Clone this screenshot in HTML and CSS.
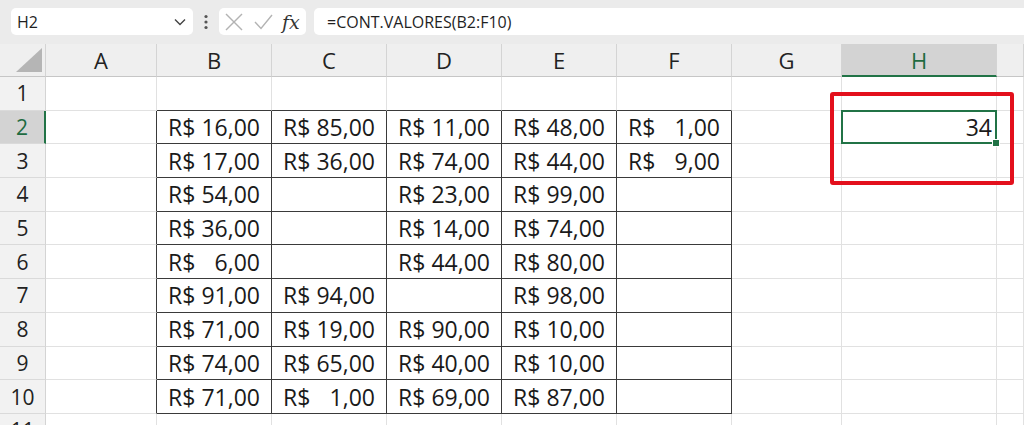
FILE: index.html
```html
<!DOCTYPE html>
<html lang="pt-BR">
  <head>
    <meta charset="UTF-8" />
    <meta name="viewport" content="width=device-width, initial-scale=1.0" />
    <title>CONT.VALORES</title>
    <link rel="stylesheet" href="styles.css">
  </head>
  <body>
    <div class="toolbar">
      <div class="namebox">
        <span>H2</span>
        <svg class="chev" width="12" height="8" viewBox="0 0 12 8"><polyline points="1,1.5 6,6.5 11,1.5" fill="none" stroke="#444" stroke-width="1.4"/></svg>
      </div>
      <svg class="dots" width="6" height="16" viewBox="0 0 6 16"><circle cx="3" cy="2.5" r="1.6" fill="#555"/><circle cx="3" cy="8" r="1.6" fill="#555"/><circle cx="3" cy="13.5" r="1.6" fill="#555"/></svg>
      <div class="fxbox">
        <svg width="18" height="18" viewBox="0 0 18 18"><line x1="1" y1="1" x2="17" y2="17" stroke="#b3b3b3" stroke-width="1.4"/><line x1="17" y1="1" x2="1" y2="17" stroke="#b3b3b3" stroke-width="1.4"/></svg>
        <svg width="19" height="16" viewBox="0 0 19 16"><polyline points="1,8 7,14.5 18,1" fill="none" stroke="#b3b3b3" stroke-width="1.4"/></svg>
        <span class="fx">fx</span>
      </div>
      <div class="formula">=CONT.VALORES(B2:F10)</div>
    </div>

    <div class="sheet">
      <!-- cabeçalho das colunas -->
      <div class="corner"><span></span></div>
      <div class="ch">A</div>
      <div class="ch">B</div>
      <div class="ch">C</div>
      <div class="ch">D</div>
      <div class="ch">E</div>
      <div class="ch">F</div>
      <div class="ch">G</div>
      <div class="ch sel">H</div>
      <div class="ch"></div>

      <!-- 1 -->
      <div class="rh">1</div>
      <div class="c"></div>
      <div class="c et"></div>
      <div class="c et"></div>
      <div class="c et"></div>
      <div class="c et"></div>
      <div class="c et"></div>
      <div class="c"></div>
      <div class="c"></div>
      <div class="c"></div>

      <!-- 2 -->
      <div class="rh sel">2</div>
      <div class="c el"></div>
      <div class="c b"><span>R$</span><span>16,00</span></div>
      <div class="c b"><span>R$</span><span>85,00</span></div>
      <div class="c b"><span>R$</span><span>11,00</span></div>
      <div class="c b"><span>R$</span><span>48,00</span></div>
      <div class="c b"><span>R$</span><span>1,00</span></div>
      <div class="c"></div>
      <div class="c num active">34<i class="handle"></i></div>
      <div class="c"></div>

      <!-- 3 -->
      <div class="rh">3</div>
      <div class="c el"></div>
      <div class="c b"><span>R$</span><span>17,00</span></div>
      <div class="c b"><span>R$</span><span>36,00</span></div>
      <div class="c b"><span>R$</span><span>74,00</span></div>
      <div class="c b"><span>R$</span><span>44,00</span></div>
      <div class="c b"><span>R$</span><span>9,00</span></div>
      <div class="c"></div>
      <div class="c"></div>
      <div class="c"></div>

      <!-- 4 -->
      <div class="rh">4</div>
      <div class="c el"></div>
      <div class="c b"><span>R$</span><span>54,00</span></div>
      <div class="c b"></div>
      <div class="c b"><span>R$</span><span>23,00</span></div>
      <div class="c b"><span>R$</span><span>99,00</span></div>
      <div class="c b"></div>
      <div class="c"></div>
      <div class="c"></div>
      <div class="c"></div>

      <!-- 5 -->
      <div class="rh">5</div>
      <div class="c el"></div>
      <div class="c b"><span>R$</span><span>36,00</span></div>
      <div class="c b"></div>
      <div class="c b"><span>R$</span><span>14,00</span></div>
      <div class="c b"><span>R$</span><span>74,00</span></div>
      <div class="c b"></div>
      <div class="c"></div>
      <div class="c"></div>
      <div class="c"></div>

      <!-- 6 -->
      <div class="rh">6</div>
      <div class="c el"></div>
      <div class="c b"><span>R$</span><span>6,00</span></div>
      <div class="c b"></div>
      <div class="c b"><span>R$</span><span>44,00</span></div>
      <div class="c b"><span>R$</span><span>80,00</span></div>
      <div class="c b"></div>
      <div class="c"></div>
      <div class="c"></div>
      <div class="c"></div>

      <!-- 7 -->
      <div class="rh">7</div>
      <div class="c el"></div>
      <div class="c b"><span>R$</span><span>91,00</span></div>
      <div class="c b"><span>R$</span><span>94,00</span></div>
      <div class="c b"></div>
      <div class="c b"><span>R$</span><span>98,00</span></div>
      <div class="c b"></div>
      <div class="c"></div>
      <div class="c"></div>
      <div class="c"></div>

      <!-- 8 -->
      <div class="rh">8</div>
      <div class="c el"></div>
      <div class="c b"><span>R$</span><span>71,00</span></div>
      <div class="c b"><span>R$</span><span>19,00</span></div>
      <div class="c b"><span>R$</span><span>90,00</span></div>
      <div class="c b"><span>R$</span><span>10,00</span></div>
      <div class="c b"></div>
      <div class="c"></div>
      <div class="c"></div>
      <div class="c"></div>

      <!-- 9 -->
      <div class="rh">9</div>
      <div class="c el"></div>
      <div class="c b"><span>R$</span><span>74,00</span></div>
      <div class="c b"><span>R$</span><span>65,00</span></div>
      <div class="c b"><span>R$</span><span>40,00</span></div>
      <div class="c b"><span>R$</span><span>10,00</span></div>
      <div class="c b"></div>
      <div class="c"></div>
      <div class="c"></div>
      <div class="c"></div>

      <!-- 10 -->
      <div class="rh">10</div>
      <div class="c el"></div>
      <div class="c b"><span>R$</span><span>71,00</span></div>
      <div class="c b"><span>R$</span><span>1,00</span></div>
      <div class="c b"><span>R$</span><span>69,00</span></div>
      <div class="c b"><span>R$</span><span>87,00</span></div>
      <div class="c b"></div>
      <div class="c"></div>
      <div class="c"></div>
      <div class="c"></div>

      <!-- 11 -->
      <div class="rh">11</div>
      <div class="c"></div>
      <div class="c"></div>
      <div class="c"></div>
      <div class="c"></div>
      <div class="c"></div>
      <div class="c"></div>
      <div class="c"></div>
      <div class="c"></div>
      <div class="c"></div>

      <div class="highlight"></div>
    </div>
  </body>
</html>
```

FILE: styles.css
```css
html,
body {
  margin: 0;
  height: 425px;
  overflow: hidden;
  background: #ffffff;
}
body {
  font-family: "Open Sans", "Noto Sans", sans-serif;
  color: #1f1f1f;
}

/* barra de fórmulas */
.toolbar {
  height: 44px;
  box-sizing: border-box;
  background: #ebebeb;
  display: flex;
  align-items: center;
  padding: 0 0 1px 11px;
}
.namebox {
  width: 182px;
  height: 27px;
  background: #fff;
  border-radius: 5px;
  box-sizing: border-box;
  padding: 0 7px 0 6px;
  display: flex;
  align-items: center;
  justify-content: space-between;
  font-size: 16px;
}
.dots {
  margin: 0 10px 0 10px;
}
.fxbox {
  width: 87px;
  height: 27px;
  background: #fff;
  border-radius: 5px;
  display: flex;
  align-items: center;
  box-sizing: border-box;
  padding: 0 4px 0 6px;
  gap: 11px;
}
.fx {
  font-family: "DejaVu Serif", "Liberation Serif", serif;
  font-style: italic;
  font-size: 19px;
  color: #333;
  margin-left: -2px;
}
.formula {
  flex: 1;
  height: 27px;
  margin-left: 8px;
  background: #fff;
  border-radius: 5px 0 0 5px;
  display: flex;
  align-items: center;
  padding-left: 13px;
  font-size: 16px;
}

/* grade */
.sheet {
  position: relative;
  display: grid;
  grid-template-columns: 46px 111px 115px 115px 115px 115px 115px 110px 155px 27px;
  grid-template-rows: 33px repeat(11, 33.7px);
  font-size: 23px;
}
.sheet > div {
  box-sizing: border-box;
}
.corner {
  background: #efefef;
  border-right: 1px solid #d4d4d4;
  border-bottom: 1px solid #c6c6c6;
  display: flex;
  justify-content: flex-end;
  align-items: flex-end;
  padding: 0 3px 4px 0;
}
.corner span {
  width: 26px;
  height: 24px;
  background: #b5b5b5;
  clip-path: polygon(100% 0, 100% 100%, 0 100%);
}
.ch {
  background: #efefef;
  border-right: 1px solid #d4d4d4;
  border-bottom: 1px solid #c6c6c6;
  display: flex;
  align-items: center;
  justify-content: center;
  font-size: 22px;
  color: #222;
}
.ch.sel {
  background: #d3d3d3;
  color: #1e6b41;
  border-bottom: 2px solid #217346;
}
.rh {
  background: #f2f2f2;
  border-right: 1px solid #d4d4d4;
  border-bottom: 1px solid #dadada;
  display: flex;
  align-items: center;
  justify-content: center;
  font-size: 21px;
  color: #222;
}
.rh.sel {
  background: #d3d3d3;
  color: #1e6b41;
  border-right: 2px solid #217346;
}
.c {
  border-right: 1px solid #e1e1e1;
  border-bottom: 1px solid #e1e1e1;
  display: flex;
  align-items: center;
  justify-content: space-between;
  padding: 0 11px 0 11px;
  white-space: nowrap;
  color: #1a1a1a;
}
.c.b {
  border-right-color: #3a3a3a;
  border-bottom-color: #3a3a3a;
}
.c.el {
  border-right-color: #3a3a3a;
}
.c.et {
  border-bottom-color: #3a3a3a;
}
.c.num {
  justify-content: flex-end;
  padding-right: 4px;
}
.active {
  position: relative;
}
.active::after {
  content: "";
  position: absolute;
  left: -1px;
  top: -1px;
  right: -1px;
  bottom: -1px;
  border: 2px solid #217346;
}
.handle {
  position: absolute;
  right: -4px;
  bottom: -4px;
  width: 6px;
  height: 6px;
  background: #217346;
  border: 1px solid #fff;
  z-index: 1;
}
.highlight {
  position: absolute;
  left: 830px;
  top: 48px;
  width: 184px;
  height: 93px;
  border: 4px solid #e3101c;
  border-radius: 3px;
}
```
